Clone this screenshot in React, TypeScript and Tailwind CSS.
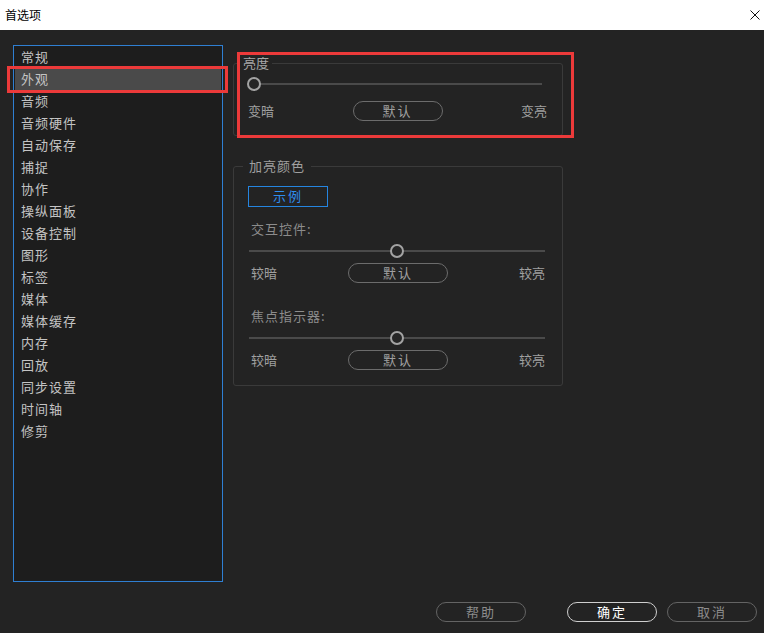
const items = ["常规", "外观", "音频", "音频硬件", "自动保存", "捕捉", "协作", "操纵面板", "设备控制", "图形", "标签", "媒体", "媒体缓存", "内存", "回放", "同步设置", "时间轴", "修剪"];

function Slider({ width, thumbLeft }: { width: number; thumbLeft: number }) {
  return (
    <div className="relative flex h-[14px] items-center" style={{ width }}>
      <div className="h-[2px] w-full bg-[#4a4a4a]" />
      <div className="absolute top-0 size-[14px] rounded-full border-2 border-[#a3a3a3] bg-[#262626]" style={{ left: thumbLeft }} />
    </div>
  );
}

function DefaultRow({ width, left, right, btnWidth, btnHeight }: { width: number; left: string; right: string; btnWidth: number; btnHeight: number }) {
  return (
    <div className="flex items-center justify-between text-[13px] leading-[16px] text-[#a0a0a0]" style={{ width }}>
      <span>{left}</span>
      <button
        type="button"
        className="flex items-center justify-center rounded-full border-[1.5px] border-[#6c6c6c] pb-[1px] text-[13px] tracking-[2px] text-[#a0a0a0]"
        style={{ width: btnWidth, height: btnHeight }}
      >
        默认
      </button>
      <span>{right}</span>
    </div>
  );
}

function FooterButton({ label, primary = false }: { label: string; primary?: boolean }) {
  return (
    <button
      type="button"
      className={`flex h-[20px] w-[90px] items-center justify-center rounded-full border-[1.5px] pb-[1px] text-[13px] tracking-[2px] ${
        primary ? "border-[#cfcfcf] text-white" : "border-[#646464] text-[#8c8c8c]"
      }`}
    >
      {label}
    </button>
  );
}

export default function App() {
  return (
    <div className="relative flex h-[633px] w-[764px] flex-col overflow-hidden font-['Noto_Sans_CJK_SC',sans-serif]">
      <header className="flex h-[30px] items-center justify-between bg-white pl-[5px] pr-[4px]">
        <span className="text-[12px] text-black">首选项</span>
        <svg width="10" height="10" viewBox="0 0 10 10">
          <path d="M0.5 0.5L9.5 9.5M9.5 0.5L0.5 9.5" stroke="#111" strokeWidth="1" />
        </svg>
      </header>

      <div className="flex flex-1 flex-col bg-[#232323]">
        <div className="flex pl-[13px] pt-[15px]">
          <ul className="h-[537px] w-[210px] border border-[#2f7fd2] bg-[#1d1d1d] p-[1px]">
            {items.map((item) => (
              <li
                key={item}
                className={`flex h-[22px] items-center pb-[3px] pl-[6px] text-[13px] tracking-[1px] text-[#c4c4c4] ${item === "外观" ? "bg-[#4a4a4a]" : ""}`}
              >
                {item}
              </li>
            ))}
          </ul>

          <div className="ml-[10px] flex w-[330px] flex-col pt-[10px]">
            <fieldset className="h-[81px] rounded-[3px] border border-[#3a3a3a] p-0">
              <legend className="ml-[6px] px-[3px] text-[13px] leading-[16px] text-[#a8a8a8]">亮度</legend>
              <div className="flex flex-col pl-[15px] pt-[6px]">
                <Slider width={293} thumbLeft={-2} />
                <div className="mt-[10px] -ml-[1px]">
                  <DefaultRow width={299} left="变暗" right="变亮" btnWidth={90} btnHeight={20} />
                </div>
              </div>
            </fieldset>

            <fieldset className="mt-[22px] h-[228px] rounded-[3px] border border-[#3a3a3a] p-0">
              <legend className="ml-[9px] px-[6px] text-[13px] leading-[16px] tracking-[1px] text-[#a0a0a0]">加亮颜色</legend>
              <div className="flex flex-col pl-[15px]">
                <div className="ml-[-1px] mt-[12px] flex h-[21px] w-[80px] items-center justify-center border border-[#2585e0] pb-[1px] text-[13px] tracking-[2px] text-[#2e8df0]">
                  示例
                </div>
                <div className="mt-[14px] pl-[2px] text-[13px] leading-[16px] tracking-[1px] text-[#8c8c8c]">交互控件:</div>
                <div className="mt-[7px]">
                  <Slider width={296} thumbLeft={141} />
                </div>
                <div className="mt-[5px] pl-[2px]">
                  <DefaultRow width={294} left="较暗" right="较亮" btnWidth={100} btnHeight={20} />
                </div>
                <div className="mt-[25px] pl-[2px] text-[13px] leading-[16px] tracking-[1px] text-[#8c8c8c]">焦点指示器:</div>
                <div className="mt-[7px]">
                  <Slider width={296} thumbLeft={141} />
                </div>
                <div className="mt-[5px] pl-[2px]">
                  <DefaultRow width={294} left="较暗" right="较亮" btnWidth={100} btnHeight={20} />
                </div>
              </div>
            </fieldset>
          </div>
        </div>

        <div className="mt-[20px] flex pl-[436px]">
          <FooterButton label="帮助" />
          <div className="ml-[41px]">
            <FooterButton label="确定" primary />
          </div>
          <div className="ml-[10px]">
            <FooterButton label="取消" />
          </div>
        </div>
      </div>

      <div className="pointer-events-none absolute left-[7px] top-[66px] h-[27px] w-[221px] border-[3px] border-[#ec3a3a]" />
      <div className="pointer-events-none absolute left-[237px] top-[52px] h-[86px] w-[337px] border-[3px] border-[#ec3a3a]" />
    </div>
  );
}
